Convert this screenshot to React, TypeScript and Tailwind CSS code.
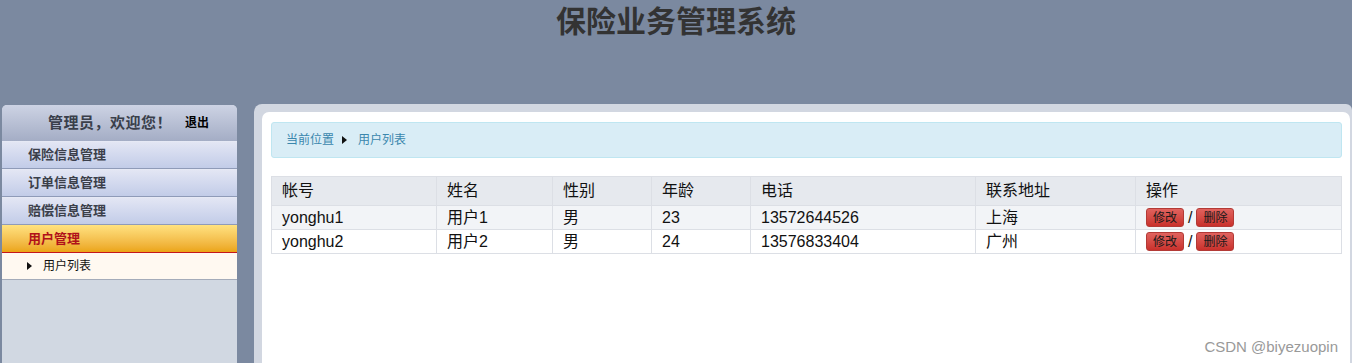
import React from 'react'

const font = { fontFamily: '"Liberation Sans", "Noto Sans CJK SC", sans-serif' }

const menus = ['保险信息管理', '订单信息管理', '赔偿信息管理']

const users = [
  { account: 'yonghu1', name: '用户1', sex: '男', age: 23, phone: '13572644526', addr: '上海' },
  { account: 'yonghu2', name: '用户2', sex: '男', age: 24, phone: '13576833404', addr: '广州' },
]

const cols = ['w-[165px]', 'w-[116px]', 'w-[99px]', 'w-[99px]', 'w-[225px]', 'w-[160px]', 'flex-1']

const Tri = () => (
  <svg width="5" height="8" viewBox="0 0 5 8" className="shrink-0">
    <path d="M0 0 L5 4 L0 8 Z" fill="#111" />
  </svg>
)

const Btn = ({ label }: { label: string }) => (
  <span className="inline-flex h-[19px] w-[38px] items-center justify-center rounded-[3px] border border-[#b33a36] bg-gradient-to-b from-[#e0625e] to-[#c9302c] text-[12px] text-[#1a1a1a]">
    {label}
  </span>
)

export default function App() {
  return (
    <div className="h-[363px] w-[1352px] overflow-hidden bg-[#7b89a0]" style={font}>
      {/* header */}
      <div className="h-[104px] pt-[3px] text-center text-[30px] font-bold leading-[38px] text-[#333]">
        保险业务管理系统
      </div>

      <div className="flex h-[259px]">
        {/* sidebar */}
        <div className="ml-[2px] mt-[1px] w-[235px] overflow-hidden rounded-t-[5px] bg-[#d1d8e2]">
          <div className="flex h-[36px] items-center bg-gradient-to-b from-[#cdd3e4] to-[#a4adc5] pl-[46px]">
            <span className="text-[15px] font-bold tracking-[0.5px] text-[#3a3f4b]">管理员，欢迎您！</span>
            <span className="ml-[13px] text-[12px] font-bold text-black">退出</span>
          </div>
          {menus.map((m) => (
            <div
              key={m}
              className="flex h-[28px] items-center border-t border-b border-t-[#e6e9f5] border-b-[#8f9bb8] bg-gradient-to-b from-[#e3e6f4] to-[#c2cce8] pl-[26px] text-[13px] font-bold text-[#3b3f4a]"
            >
              {m}
            </div>
          ))}
          <div className="flex h-[28px] items-center border-b border-b-[#c4161c] bg-gradient-to-b from-[#ffe27f] to-[#eba512] pl-[26px] text-[13px] font-bold text-[#b0111a]">
            用户管理
          </div>
          <div className="flex h-[27px] items-center gap-[11px] border-b border-b-[#a4acba] bg-[#fff9f1] pl-[25px] text-[12px] text-[#111]">
            <Tri />
            用户列表
          </div>
        </div>

        {/* content frame */}
        <div className="ml-[17px] flex-1 rounded-tl-[8px] rounded-tr-[6px] bg-[#d2d7e1] pl-[8px] pr-[2px] pt-[8px]">
          <div className="h-full rounded-t-[7px] bg-white pl-[9px] pr-[8px] pt-[10px]">
            <div className="flex h-[36px] items-center gap-[8px] rounded-[3px] border border-[#bfe6f1] bg-[#d9edf6] pl-[14px] text-[12px] text-[#3a87ad]">
              <span>当前位置</span>
              <Tri />
              <span className="ml-[3px]">用户列表</span>
            </div>

            <div className="mt-[18px] border border-[#dcdfe5] text-[16px] text-[#111]">
              <div className="flex h-[28px] bg-[#e6e9ee]">
                {['帐号', '姓名', '性别', '年龄', '电话', '联系地址', '操作'].map((h, i) => (
                  <div
                    key={h}
                    className={`${cols[i]} flex items-center pl-[10px] ${i < 6 ? 'border-r border-[#dcdfe5]' : ''}`}
                  >
                    {h}
                  </div>
                ))}
              </div>
              {users.map((u, r) => (
                <div
                  key={u.account}
                  className={`flex h-[24px] border-t border-[#dcdfe5] ${r === 0 ? 'bg-[#f2f4f7]' : 'bg-white'}`}
                >
                  {[u.account, u.name, u.sex, String(u.age), u.phone, u.addr].map((c, i) => (
                    <div key={i} className={`${cols[i]} flex items-center border-r border-[#dcdfe5] pl-[10px]`}>
                      {c}
                    </div>
                  ))}
                  <div className="flex flex-1 items-center gap-[4px] pl-[10px]">
                    <Btn label="修改" />
                    <span className="text-[16px] leading-none">/</span>
                    <Btn label="删除" />
                  </div>
                </div>
              ))}
            </div>

            <div className="mt-[82px] pr-[4px] text-right text-[15px] text-[#999]">CSDN @biyezuopin</div>
          </div>
        </div>
      </div>
    </div>
  )
}
